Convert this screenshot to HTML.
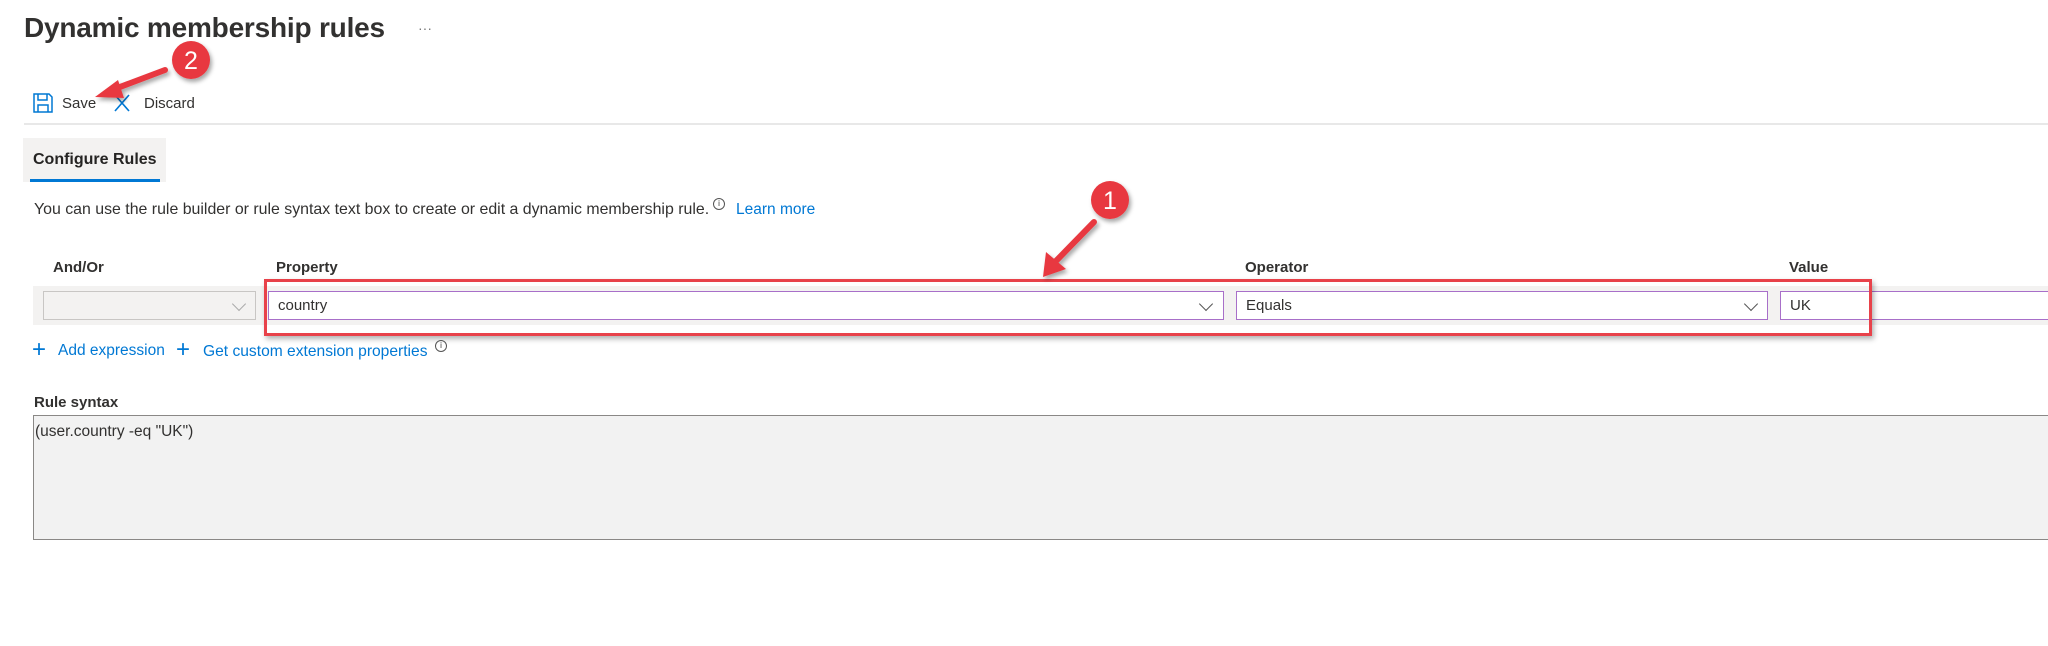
<!DOCTYPE html>
<html><head><meta charset="utf-8"><style>
*{margin:0;padding:0;box-sizing:border-box}
body{width:2048px;height:646px;background:#fff;position:relative;overflow:hidden;font-family:"Liberation Sans",sans-serif;color:#323130}
.a{position:absolute;white-space:nowrap}
.inp{position:absolute;border:1px solid #a86fc9;background:#fff;height:29px;font-size:15px;line-height:27px;padding-left:9px}
.chev{position:absolute;top:7px;width:10px;height:10px;border-right:1px solid #555;border-bottom:1px solid #555;transform:rotate(45deg)}
.blue{color:#0078d4}
</style></head><body>
<div class="a" style="left:24px;top:12px;font-size:28px;font-weight:bold;color:#323130;letter-spacing:-0.2px">Dynamic membership rules</div>
<div class="a" style="left:418px;top:20px;font-size:14px;color:#777">···</div>

<svg class="a" style="left:33px;top:93px" width="20" height="20" viewBox="0 0 20 20"><path d="M1 1h15l3 3v15H1z M5 1v6h9V1 M5 19v-7h10v7" fill="none" stroke="#0078d4" stroke-width="1.5"/></svg>
<div class="a" style="left:62px;top:95px;font-size:15px">Save</div>
<svg class="a" style="left:114px;top:94px" width="16" height="18" viewBox="0 0 16 18"><path d="M1 1L15 17M15 1L1 17" stroke="#0078d4" stroke-width="1.6"/></svg>
<div class="a" style="left:144px;top:95px;font-size:15px">Discard</div>
<div class="a" style="left:24px;top:123px;width:2030px;height:2px;background:#e8e8e8"></div>

<div class="a" style="left:23px;top:138px;width:143px;height:44px;background:#f3f2f1"></div>
<div class="a" style="left:33px;top:151px;font-size:16px;font-weight:bold;color:#252423">Configure Rules</div>
<div class="a" style="left:30px;top:179px;width:130px;height:2.5px;background:#0078d4"></div>

<div class="a" style="left:34px;top:201px;font-size:15.9px">You can use the rule builder or rule syntax text box to create or edit a dynamic membership rule.</div>
<div class="a" style="left:713px;top:198px;width:12px;height:12px;border:1px solid #555;border-radius:50%;font-size:8px;line-height:10px;text-align:center">i</div>
<div class="a blue" style="left:736px;top:201px;font-size:15.5px">Learn more</div>

<div class="a" style="left:53px;top:259px;font-size:15px;font-weight:bold">And/Or</div>
<div class="a" style="left:276px;top:259px;font-size:15px;font-weight:bold">Property</div>
<div class="a" style="left:1245px;top:259px;font-size:15px;font-weight:bold">Operator</div>
<div class="a" style="left:1789px;top:259px;font-size:15px;font-weight:bold">Value</div>

<div class="a" style="left:33px;top:286px;width:2020px;height:39px;background:#f3f2f1"></div>
<div class="inp" style="left:43px;top:291px;width:213px;border-color:#c8c6c4;background:#f3f2f1"><div class="chev" style="left:190px;border-color:#aaa"></div></div>
<div class="inp" style="left:268px;top:291px;width:956px">country<div class="chev" style="left:932px"></div></div>
<div class="inp" style="left:1236px;top:291px;width:532px">Equals<div class="chev" style="left:509px"></div></div>
<div class="inp" style="left:1780px;top:291px;width:300px">UK</div>

<div class="a" style="left:264px;top:279px;width:1608px;height:57px;border:3px solid #e8424a;box-shadow:2px 3px 5px rgba(0,0,0,.3)"></div>

<div class="a blue" style="left:32px;top:336px;font-size:24px;font-weight:300">+</div>
<div class="a blue" style="left:58px;top:342px;font-size:15.5px">Add expression</div>
<div class="a blue" style="left:176px;top:336px;font-size:24px;font-weight:300">+</div>
<div class="a blue" style="left:203px;top:343px;font-size:15.6px">Get custom extension properties</div>
<div class="a" style="left:435px;top:340px;width:12px;height:12px;border:1px solid #555;border-radius:50%;font-size:8px;line-height:10px;text-align:center">i</div>

<div class="a" style="left:34px;top:394px;font-size:15px;font-weight:bold">Rule syntax</div>
<div class="a" style="left:33px;top:415px;width:2030px;height:125px;background:#f2f2f2;border:1px solid #8a8886"></div>
<div class="a" style="left:35px;top:423px;font-size:15.5px">(user.country -eq "UK")</div>

<svg class="a" style="left:0;top:0" width="2048" height="646">
<defs><filter id="s"><feDropShadow dx="2" dy="3" stdDeviation="2" flood-opacity=".35"/></filter></defs>
<g filter="url(#s)">
<path d="M165 70 L112 90" stroke="#e8383f" stroke-width="6" stroke-linecap="round"/>
<path d="M95 97 L118 80 L124 98 Z" fill="#e8383f"/>
<circle cx="191" cy="60" r="19" fill="#e8383f"/>
<path d="M1094 222 L1055 262" stroke="#e8383f" stroke-width="6" stroke-linecap="round"/>
<path d="M1043 277 L1046 252 L1066 269 Z" fill="#e8383f"/>
<circle cx="1110" cy="200" r="19" fill="#e8383f"/>
</g>
<text x="191" y="69" font-family="Liberation Sans" font-size="25" fill="#fff" text-anchor="middle">2</text>
<text x="1110" y="209" font-family="Liberation Sans" font-size="25" fill="#fff" text-anchor="middle">1</text>
</svg>
</body></html>
